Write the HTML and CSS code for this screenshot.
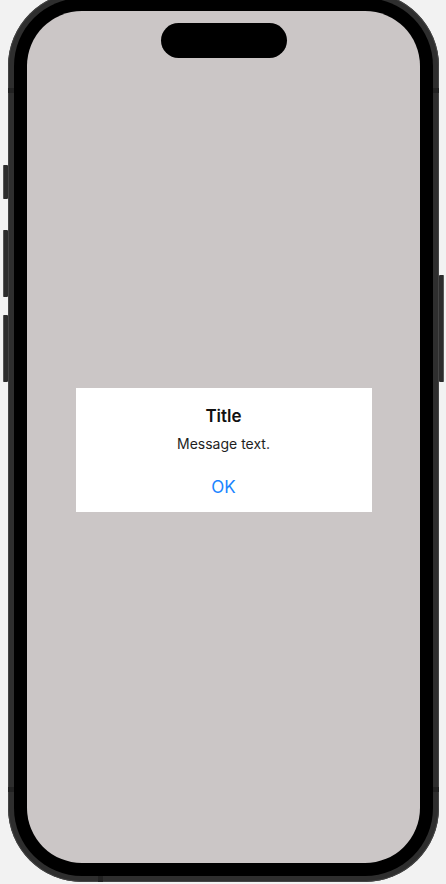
FILE: index.html
```html
<!DOCTYPE html>
<html lang="en">

<head>
    <meta charset="UTF-8">
    <title>Alert</title>
    <link rel="stylesheet" href="styles.css">
</head>

<body>
    <div class="phone">
        <span class="btn btn-action"></span>
        <span class="btn btn-vol-up"></span>
        <span class="btn btn-vol-down"></span>
        <span class="btn btn-power"></span>
        <span class="band band-l-top"></span>
        <span class="band band-r-top"></span>
        <span class="band band-l-bottom"></span>
        <span class="band band-r-bottom"></span>
        <span class="band band-bottom"></span>
        <div class="bezel">
            <div class="screen">
                <div class="island"></div>
                <div class="alert">
                    <div class="alert-title">Title</div>
                    <div class="alert-message">Message text.</div>
                    <div class="alert-button">OK</div>
                </div>
            </div>
        </div>
    </div>
</body>

</html>
```

FILE: styles.css
```css
* {
    box-sizing: border-box;
}

body {
    margin: 0;
    background: #f2f2f2;
    font-family: Inter, "Noto Sans", sans-serif;
    overflow: hidden;
}

/* frame: gray rim > black bezel > screen */
.phone {
    position: relative;
    width: 431px;
    height: 890px;
    margin: -8px 0 0 8px;
    padding: 6px;
    background: #2e2e2e;
    border-radius: 74px;
    box-shadow: 0 0 0 1px #444 inset;
}

.bezel {
    height: 100%;
    padding: 13px;
    background: #000;
    border-radius: 68px;
}

.screen {
    position: relative;
    display: flex;
    align-items: center;
    justify-content: center;
    height: 100%;
    padding-top: 26px;
    background: #cbc6c6;
    border-radius: 55px;
    overflow: hidden;
}

.island {
    position: absolute;
    top: 12px;
    left: 50%;
    width: 126px;
    height: 35px;
    margin-left: -63px;
    background: #000;
    border-radius: 18px;
}

/* side buttons */
.btn {
    position: absolute;
    width: 5px;
    background: #2c2c2c;
    border-radius: 1px;
}

.btn-action,
.btn-vol-up,
.btn-vol-down {
    left: -5px;
    border-left: 1px solid #555;
}

.btn-action {
    top: 173px;
    height: 34px;
}

.btn-vol-up {
    top: 238px;
    height: 67px;
}

.btn-vol-down {
    top: 323px;
    height: 67px;
}

.btn-power {
    right: -5px;
    top: 283px;
    height: 107px;
    border-right: 1px solid #555;
}

/* antenna lines on the rim */
.band {
    position: absolute;
    background: #222;
}

.band-l-top,
.band-l-bottom {
    left: 0;
    width: 6px;
    height: 5px;
}

.band-r-top,
.band-r-bottom {
    right: 0;
    width: 6px;
    height: 5px;
}

.band-l-top,
.band-r-top {
    top: 96px;
}

.band-l-bottom,
.band-r-bottom {
    top: 795px;
}

.band-bottom {
    bottom: 0;
    left: 90px;
    width: 5px;
    height: 6px;
}

/* alert */
.alert {
    width: 296px;
    padding: 17px 16px 14px;
    background: #fff;
    text-align: center;
}

.alert-title {
    font-size: 17px;
    line-height: 22px;
    font-weight: 600;
    color: #111;
}

.alert-message {
    margin-top: 7px;
    font-size: 14px;
    line-height: 20px;
    color: #1e1e1e;
}

.alert-button {
    margin-top: 22px;
    font-size: 17px;
    line-height: 22px;
    color: #1a84ff;
}
```
